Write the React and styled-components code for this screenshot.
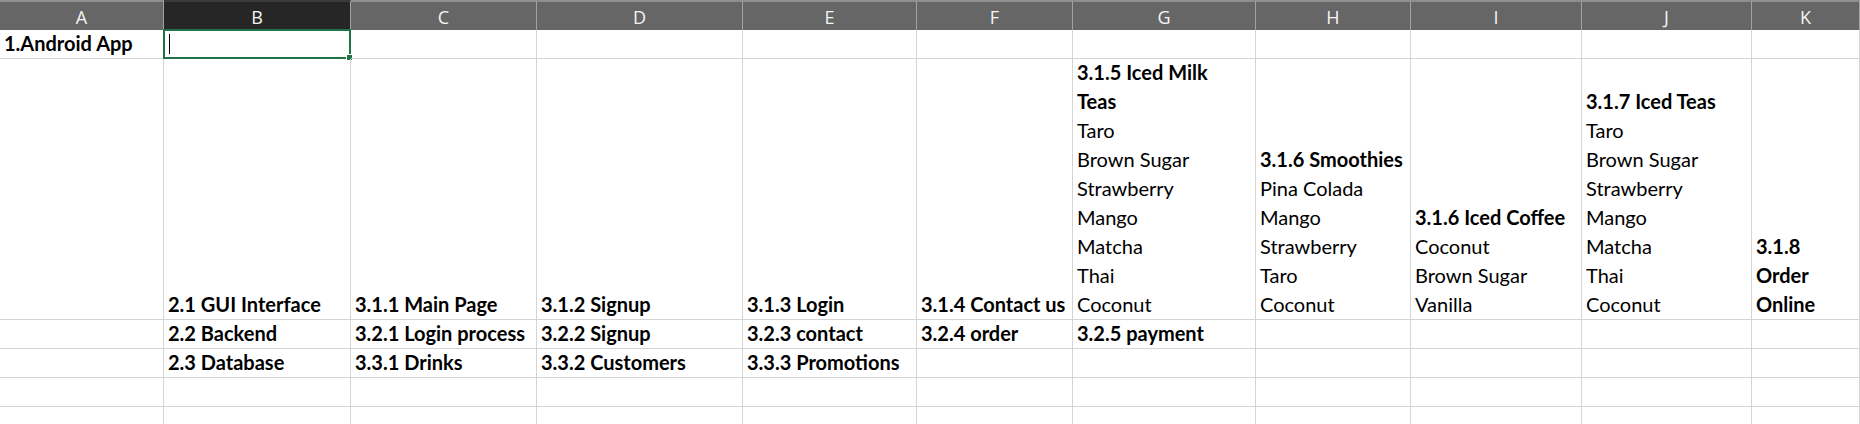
import React from 'react';
import styled, { createGlobalStyle } from 'styled-components';

const GlobalStyle = createGlobalStyle`
    html, body {
        margin: 0;
        padding: 0;
        overflow: hidden;
        background: #ffffff;
    }
`;

const columns = [
    { key: 'A', width: 164 },
    { key: 'B', width: 187 },
    { key: 'C', width: 186 },
    { key: 'D', width: 206 },
    { key: 'E', width: 174 },
    { key: 'F', width: 156 },
    { key: 'G', width: 183 },
    { key: 'H', width: 155 },
    { key: 'I', width: 171 },
    { key: 'J', width: 170 },
    { key: 'K', width: 108 }
];

const rows = [
    { height: 29, cells: { A: { head: ['1.Android App'] } } },
    {
        height: 261,
        cells: {
            B: { head: ['2.1 GUI Interface'] },
            C: { head: ['3.1.1 Main Page'] },
            D: { head: ['3.1.2 Signup'] },
            E: { head: ['3.1.3 Login'] },
            F: { head: ['3.1.4 Contact us'] },
            G: {
                head: ['3.1.5 Iced Milk', 'Teas'],
                items: ['Taro', 'Brown Sugar', 'Strawberry', 'Mango', 'Matcha', 'Thai', 'Coconut']
            },
            H: { head: ['3.1.6 Smoothies'], items: ['Pina Colada', 'Mango', 'Strawberry', 'Taro', 'Coconut'] },
            I: { head: ['3.1.6 Iced Coffee'], items: ['Coconut', 'Brown Sugar', 'Vanilla'] },
            J: {
                head: ['3.1.7 Iced Teas'],
                items: ['Taro', 'Brown Sugar', 'Strawberry', 'Mango', 'Matcha', 'Thai', 'Coconut']
            },
            K: { head: ['3.1.8', 'Order', 'Online'] }
        }
    },
    {
        height: 29,
        cells: {
            B: { head: ['2.2 Backend'] },
            C: { head: ['3.2.1 Login process'] },
            D: { head: ['3.2.2 Signup'] },
            E: { head: ['3.2.3 contact'] },
            F: { head: ['3.2.4 order'] },
            G: { head: ['3.2.5 payment'] }
        }
    },
    {
        height: 29,
        cells: {
            B: { head: ['2.3 Database'] },
            C: { head: ['3.3.1 Drinks'] },
            D: { head: ['3.3.2 Customers'] },
            E: { head: ['3.3.3 Promotions'] }
        }
    },
    { height: 29, cells: {} },
    { height: 29, cells: {} }
];

const Sheet = styled.div`
    display: grid;
    grid-template-columns: ${p => p.$cols};
    grid-template-rows: 30px ${p => p.$rows};
    width: 1860px;
    font-family: Lato, 'Open Sans', sans-serif;
    font-size: 20px;
    color: #000000;
`;

const ColumnHeader = styled.div`
    display: flex;
    align-items: center;
    justify-content: center;
    box-sizing: border-box;
    background: ${p => (p.$active ? '#262626' : '#666666')};
    border-top: 2px solid ${p => (p.$active ? '#3a3a3a' : '#8f8f8f')};
    border-right: 1px solid #a2a2a2;
    color: #f4f4f4;
    font-family: 'Open Sans', 'Noto Sans', sans-serif;
    font-size: 18px;
    padding-top: 1px;
`;

const Cell = styled.div`
    position: relative;
    display: flex;
    flex-direction: column;
    justify-content: flex-end;
    box-sizing: border-box;
    border-right: 1px solid #d4d4d4;
    border-bottom: 1px solid #d4d4d4;
    padding: 0 4px;
    min-width: 0;
`;

const Line = styled.div`
    flex: none;
    height: 29px;
    line-height: 29px;
    white-space: nowrap;
    font-weight: ${p => (p.$bold ? 700 : 400)};
`;

const Selection = styled.div`
    position: absolute;
    top: -1px;
    left: -1px;
    right: -1px;
    bottom: -1px;
    border: 2px solid #217346;
    pointer-events: none;
`;

const Handle = styled.div`
    position: absolute;
    right: -4px;
    bottom: -4px;
    width: 5px;
    height: 5px;
    background: #217346;
    border: 1px solid #ffffff;
`;

const Caret = styled.div`
    position: absolute;
    left: 4px;
    top: 3px;
    bottom: 3px;
    width: 1px;
    background: #000000;
`;

const CellContent = ({ data }) => {
    if (!data) return null;
    return (
        <>
            {data.head.map(text => (
                <Line key={text} $bold>
                    {text}
                </Line>
            ))}
            {(data.items || []).map(text => (
                <Line key={text}>{text}</Line>
            ))}
        </>
    );
};

export default function App() {
    const selected = { row: 0, col: 'B' };
    return (
        <>
            <GlobalStyle />
            <Sheet
                $cols={columns.map(c => `${c.width}px`).join(' ')}
                $rows={rows.map(r => `${r.height}px`).join(' ')}
            >
                {columns.map(col => (
                    <ColumnHeader key={col.key} $active={col.key === selected.col}>
                        {col.key}
                    </ColumnHeader>
                ))}
                {rows.map((row, i) =>
                    columns.map(col => (
                        <Cell key={`${col.key}${i}`}>
                            <CellContent data={row.cells[col.key]} />
                            {i === selected.row && col.key === selected.col && (
                                <Selection>
                                    <Caret />
                                    <Handle />
                                </Selection>
                            )}
                        </Cell>
                    ))
                )}
            </Sheet>
        </>
    );
}
